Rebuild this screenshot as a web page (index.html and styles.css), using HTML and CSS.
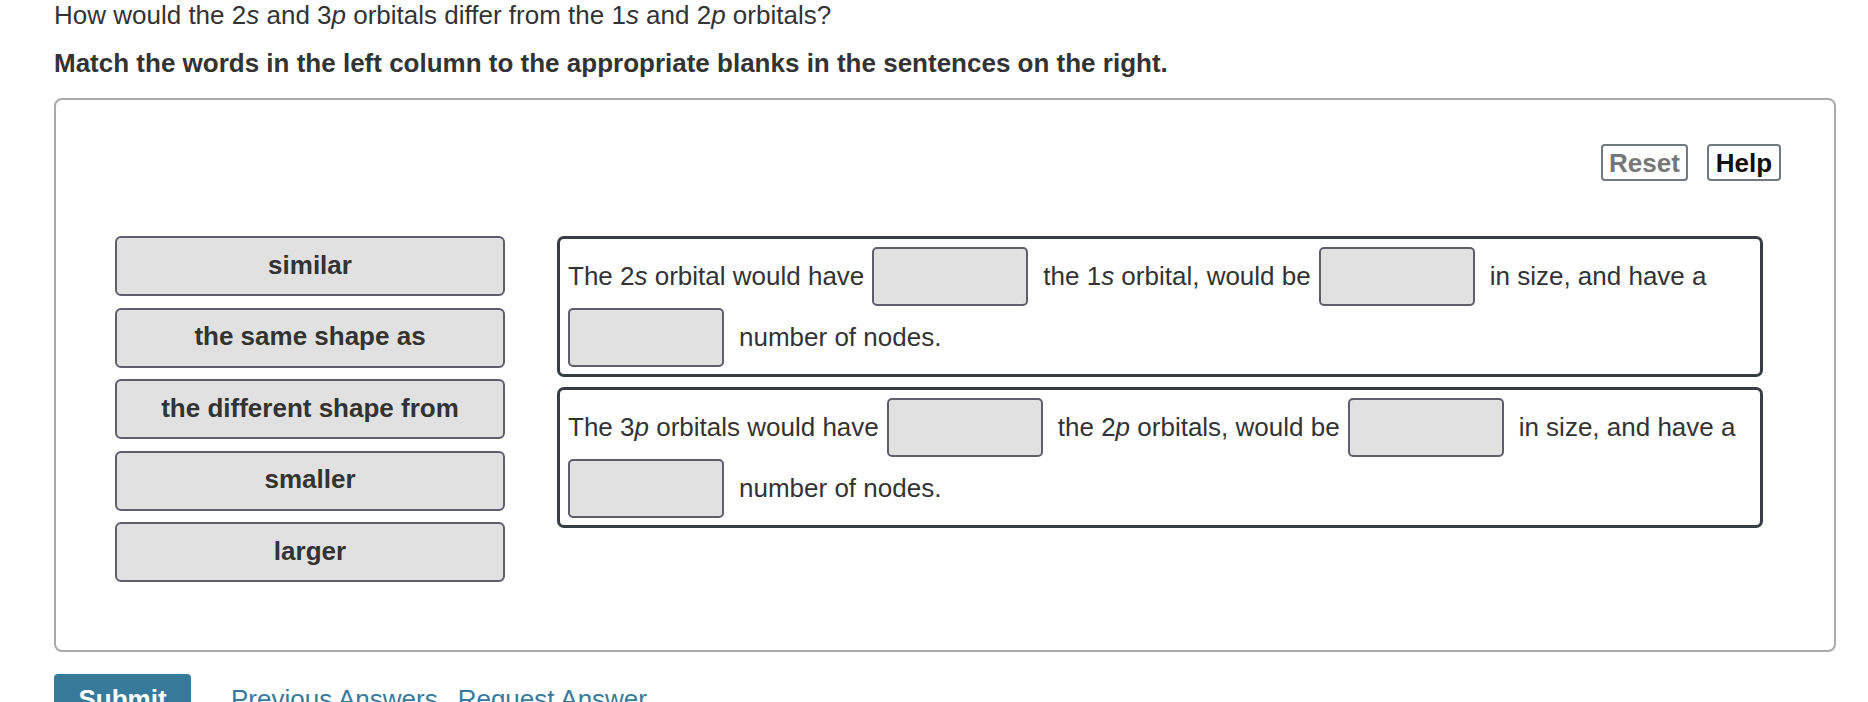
FILE: index.html
```html
<!DOCTYPE html>
<html>
<head>
<meta charset="utf-8">
<link rel="stylesheet" href="styles.css">
</head>
<body>
<div class="page">
  <p class="question">How would the 2<i>s</i> and 3<i>p</i> orbitals differ from the 1<i>s</i> and 2<i>p</i> orbitals?</p>
  <p class="instructions">Match the words in the left column to the appropriate blanks in the sentences on the right.</p>
  <div class="panel">
    <div class="toolbar">
      <button class="tool-btn reset">Reset</button>
      <button class="tool-btn help">Help</button>
    </div>
    <div class="match">
      <div class="choices">
        <div class="choice">similar</div>
        <div class="choice">the same shape as</div>
        <div class="choice">the different shape from</div>
        <div class="choice">smaller</div>
        <div class="choice">larger</div>
      </div>
      <div class="sentences">
        <div class="sentence">
          <span class="txt">The 2<i>s</i> orbital would have</span>
          <span class="blank"></span>
          <span class="txt">the 1<i>s</i> orbital, would be</span>
          <span class="blank"></span>
          <span class="txt">in size, and have a</span>
          <span class="blank wrap"></span>
          <span class="txt">number of nodes.</span>
        </div>
        <div class="sentence">
          <span class="txt">The 3<i>p</i> orbitals would have</span>
          <span class="blank"></span>
          <span class="txt">the 2<i>p</i> orbitals, would be</span>
          <span class="blank"></span>
          <span class="txt">in size, and have a</span>
          <span class="blank wrap"></span>
          <span class="txt">number of nodes.</span>
        </div>
      </div>
    </div>
  </div>
  <div class="actions">
    <button class="submit">Submit</button>
    <a class="link" href="#">Previous Answers</a>
    <a class="link" href="#">Request Answer</a>
  </div>
</div>
</body>
</html>
```

FILE: styles.css
```css
html, body {
  margin: 0;
  padding: 0;
  background: #fff;
}
body {
  font-family: "Liberation Sans", Arial, Helvetica, sans-serif;
  color: #333;
  font-size: 26px;
}
.page {
  padding-left: 54px;
  width: 1782px;
}
.question {
  margin: 2px 0 0;
  line-height: 26px;
}
.instructions {
  margin: 19.5px 0 0;
  line-height: 30px;
  font-weight: bold;
}
.panel {
  margin-top: 20.5px;
  border: 2px solid #aaa;
  border-radius: 8px;
  padding: 44px 53px 0 59px;
  box-sizing: border-box;
  height: 554px;
}
.toolbar {
  display: flex;
  justify-content: flex-end;
  gap: 19px;
}
.tool-btn {
  font-family: "Liberation Sans", Arial, sans-serif;
  font-size: 26px;
  font-weight: bold;
  background: #fff;
  border: 2px solid #6f7b80;
  border-radius: 4px;
  height: 37px;
  padding: 0 4px;
  line-height: 1;
}
.reset { color: #777; width: 87px; }
.help { color: #111; width: 74px; }
.match {
  display: flex;
  margin-top: 55px;
  gap: 52px;
}
.choices {
  display: flex;
  flex-direction: column;
  gap: 11.5px;
  width: 390px;
}
.choice {
  height: 60px;
  box-sizing: border-box;
  background: #e1e1e1;
  border: 2.5px solid #5e5e6c;
  border-radius: 6px;
  font-weight: bold;
  display: flex;
  align-items: center;
  justify-content: center;
  padding-bottom: 2px;
}
.sentences {
  display: flex;
  flex-direction: column;
  gap: 10.5px;
  width: 1206px;
}
.sentence {
  border: 3px solid #363d44;
  border-radius: 7px;
  padding: 8px 8px 7px 8px;
  display: flex;
  flex-wrap: wrap;
  align-items: center;
  row-gap: 1.5px;
}
.blank {
  width: 156px;
  height: 59px;
  box-sizing: border-box;
  background: #e1e1e1;
  border: 2.5px solid #5e5e6c;
  border-radius: 5px;
  margin: 0 15px 0 8px;
}
.blank.wrap { margin-left: 0; }
.actions {
  margin-top: 22px;
  display: flex;
  align-items: flex-start;
}
.submit {
  width: 137px;
  height: 50px;
  background: #387a99;
  color: #fff;
  border: none;
  border-radius: 4px;
  font-family: "Liberation Sans", Arial, sans-serif;
  font-size: 26px;
  font-weight: bold;
  margin-right: 40px;
}
.link {
  color: #387a99;
  text-decoration: none;
  margin-right: 20px;
  line-height: 50px;
}
```
